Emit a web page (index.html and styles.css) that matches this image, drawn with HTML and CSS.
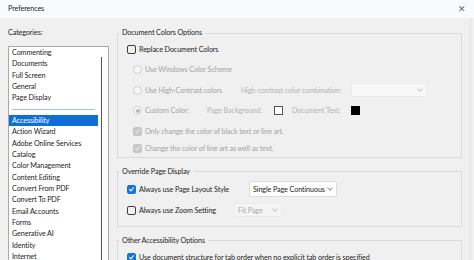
FILE: index.html
```html
<!DOCTYPE html>
<html lang="en">
<head>
    <meta charset="UTF-8">
    <meta name="viewport" content="width=device-width, initial-scale=1.0">
    <title>Preferences</title>
    <link rel="stylesheet" href="styles.css">
</head>
<body>
    <div class="titlebar">
        <span class="title">Preferences</span>
        <span class="close">&#x2715;</span>
    </div>
    <div class="main">
        <div class="sidebar">
            <div class="label">Categories:</div>
            <div class="list">
                <div class="item">Commenting</div>
                <div class="item">Documents</div>
                <div class="item">Full Screen</div>
                <div class="item">General</div>
                <div class="item">Page Display</div>
                <div class="list-sep"><span></span></div>
                <div class="item selected">Accessibility</div>
                <div class="item">Action Wizard</div>
                <div class="item">Adobe Online Services</div>
                <div class="item">Catalog</div>
                <div class="item">Color Management</div>
                <div class="item">Content Editing</div>
                <div class="item">Convert From PDF</div>
                <div class="item">Convert To PDF</div>
                <div class="item">Email Accounts</div>
                <div class="item">Forms</div>
                <div class="item">Generative AI</div>
                <div class="item">Identity</div>
                <div class="item">Internet</div>
                <div class="scroll-thumb"></div>
            </div>
        </div>

        <div class="content">
            <fieldset class="group group-colors">
                <legend>Document Colors Options</legend>
                <div class="row">
                    <span class="check"></span>
                    <span>Replace Document Colors</span>
                </div>
                <div class="row sub disabled">
                    <span class="radio"></span>
                    <span>Use Windows Color Scheme</span>
                </div>
                <div class="row sub disabled">
                    <span class="radio"></span>
                    <span class="w-hc">Use High-Contrast colors</span>
                    <span class="faint w-hcc">High-contrast color combination:</span>
                    <span class="select select-hc"><span></span><span class="chev"></span></span>
                </div>
                <div class="row sub disabled">
                    <span class="radio on"></span>
                    <span class="w-cc">Custom Color:</span>
                    <span class="faint w-pb">Page Background:</span>
                    <span class="swatch"></span>
                    <span class="faint w-dt">Document Text:</span>
                    <span class="swatch black"></span>
                </div>
                <div class="row sub disabled">
                    <span class="check dis"></span>
                    <span>Only change the color of black text or line art.</span>
                </div>
                <div class="row sub short disabled">
                    <span class="check dis"></span>
                    <span>Change the color of line art as well as text.</span>
                </div>
            </fieldset>

            <fieldset class="group group-page">
                <legend>Override Page Display</legend>
                <div class="row">
                    <span class="check on"></span>
                    <span class="w-layout">Always use Page Layout Style</span>
                    <span class="select select-layout"><span>Single Page Continuous</span><span class="chev"></span></span>
                </div>
                <div class="row">
                    <span class="check"></span>
                    <span class="w-zoom">Always use Zoom Setting</span>
                    <span class="select select-zoom"><span>Fit Page</span><span class="chev"></span></span>
                </div>
            </fieldset>

            <fieldset class="group group-other">
                <legend>Other Accessibility Options</legend>
                <div class="row">
                    <span class="check on"></span>
                    <span>Use document structure for tab order when no explicit tab order is specified</span>
                </div>
            </fieldset>
        </div>
    </div>
</body>
</html>
```

FILE: styles.css
```css
body {
    margin: 0;
    width: 474px;
    height: 260px;
    overflow: hidden;
    background-color: #f0f0f0;
    font-family: Lato, "Open Sans", sans-serif;
    font-size: 7.2px;
    letter-spacing: -0.1px;
    color: #1e1e1e;
}
.titlebar {
    height: 18px;
    background-color: #f8fafc;
    display: flex;
    align-items: center;
    justify-content: space-between;
    padding: 0 8px 2px 8px;
    box-sizing: border-box;
}
.close {
    font-size: 9px;
    color: #666;
}
.main {
    display: flex;
}
.sidebar {
    margin-left: 8px;
    width: 101px;
}
.label {
    margin-top: 9px;
    line-height: 12px;
    height: 12px;
    margin-bottom: 7px;
}
.list {
    position: relative;
    background-color: white;
    border: 1px solid #a9a9a9;
    border-bottom: none;
    height: 220px;
    overflow: hidden;
}
.item {
    height: 11.33px;
    line-height: 11.33px;
    padding-left: 3px;
    margin-right: 10px;
    white-space: nowrap;
}
.item.selected {
    background-color: #0f6fd8;
    color: white;
}
.list-sep {
    height: 11.33px;
    display: flex;
    align-items: center;
    padding: 0 3px 0 3px;
    margin-right: 10px;
}
.list-sep span {
    flex: 1;
    height: 1px;
    background-color: #9cc3ea;
}
.scroll-thumb {
    position: absolute;
    right: 6px;
    top: 10px;
    bottom: 0;
    width: 1px;
    background-color: #555;
}
.content {
    margin-left: 8px;
    width: 353px;
    border-right: 1px solid #e2e2e2;
    padding-top: 9px;
    height: 233px;
}
.group {
    margin: 0;
    padding: 0 0 2px 1px;
    width: 345px;
    border: 1px solid #dadada;
    box-sizing: border-box;
}
.group + .group {
    margin-top: 8px;
}
.group legend {
    padding: 0 3px;
    line-height: 12px;
}
.group-page {
    padding-bottom: 5px;
}
.row {
    display: flex;
    align-items: center;
    height: 20.5px;
    padding-left: 8px;
    white-space: nowrap;
}
.group-page .row,
.group-other .row {
    height: 21px;
}
.group-page .row:first-of-type {
    margin-top: 1px;
}
.row.sub {
    padding-left: 14px;
}
.row.short {
    height: 13px;
}
.disabled {
    color: #a3a3a3;
}
.faint {
    color: #b3b3b3;
}
.check, .radio {
    width: 9px;
    height: 9px;
    box-sizing: border-box;
    margin-right: 3px;
    flex-shrink: 0;
    position: relative;
}
.check {
    border: 1px solid #3a3a3a;
    border-radius: 2px;
}
.check.on {
    background-color: #1373e3;
    border-color: #1373e3;
}
.check.on::after, .check.dis::after {
    content: "";
    position: absolute;
    left: 2px;
    top: 0px;
    width: 2px;
    height: 4px;
    border-right: 1.3px solid white;
    border-bottom: 1.3px solid white;
    transform: rotate(40deg);
}
.check.dis {
    background-color: #c6c6c6;
    border-color: #c6c6c6;
}
.check.dis::after {
    border-color: #e8e8e8;
}
.radio {
    border: 1px solid #cfcfcf;
    border-radius: 50%;
    background-color: #f6f6f6;
}
.radio.on::after {
    content: "";
    position: absolute;
    left: 1.5px;
    top: 1.5px;
    width: 4px;
    height: 4px;
    border-radius: 50%;
    background-color: #b5b5b5;
}
.w-hc { width: 96px; }
.w-hcc { width: 110px; }
.w-cc { width: 62px; }
.w-pb { width: 67px; }
.w-dt { margin-left: 9px; width: 59px; }
.w-layout { width: 110px; }
.w-zoom { width: 95px; }
.select {
    display: flex;
    align-items: center;
    justify-content: space-between;
    box-sizing: border-box;
    background-color: white;
    border: 1px solid #dcdcdc;
    border-radius: 2px;
    padding: 0 4px 0 3px;
}
.select-hc {
    width: 76px;
    height: 14px;
    background-color: #f8f8f8;
    border-color: #ececec;
}
.select-layout {
    width: 88px;
    height: 16px;
}
.select-zoom {
    width: 48px;
    height: 14px;
    color: #a8a8a8;
    background-color: #f4f4f4;
    border-color: #ececec;
}
.chev {
    width: 3px;
    height: 3px;
    border-right: 1px solid #999;
    border-bottom: 1px solid #999;
    transform: rotate(45deg);
    margin-top: -2px;
}
.select-hc .chev, .select-zoom .chev {
    border-color: #c8c8c8;
}
.swatch {
    width: 9px;
    height: 9px;
    box-sizing: border-box;
    border: 1px solid #555;
    background-color: white;
}
.swatch.black {
    background-color: #000;
    border-color: #000;
}
```
